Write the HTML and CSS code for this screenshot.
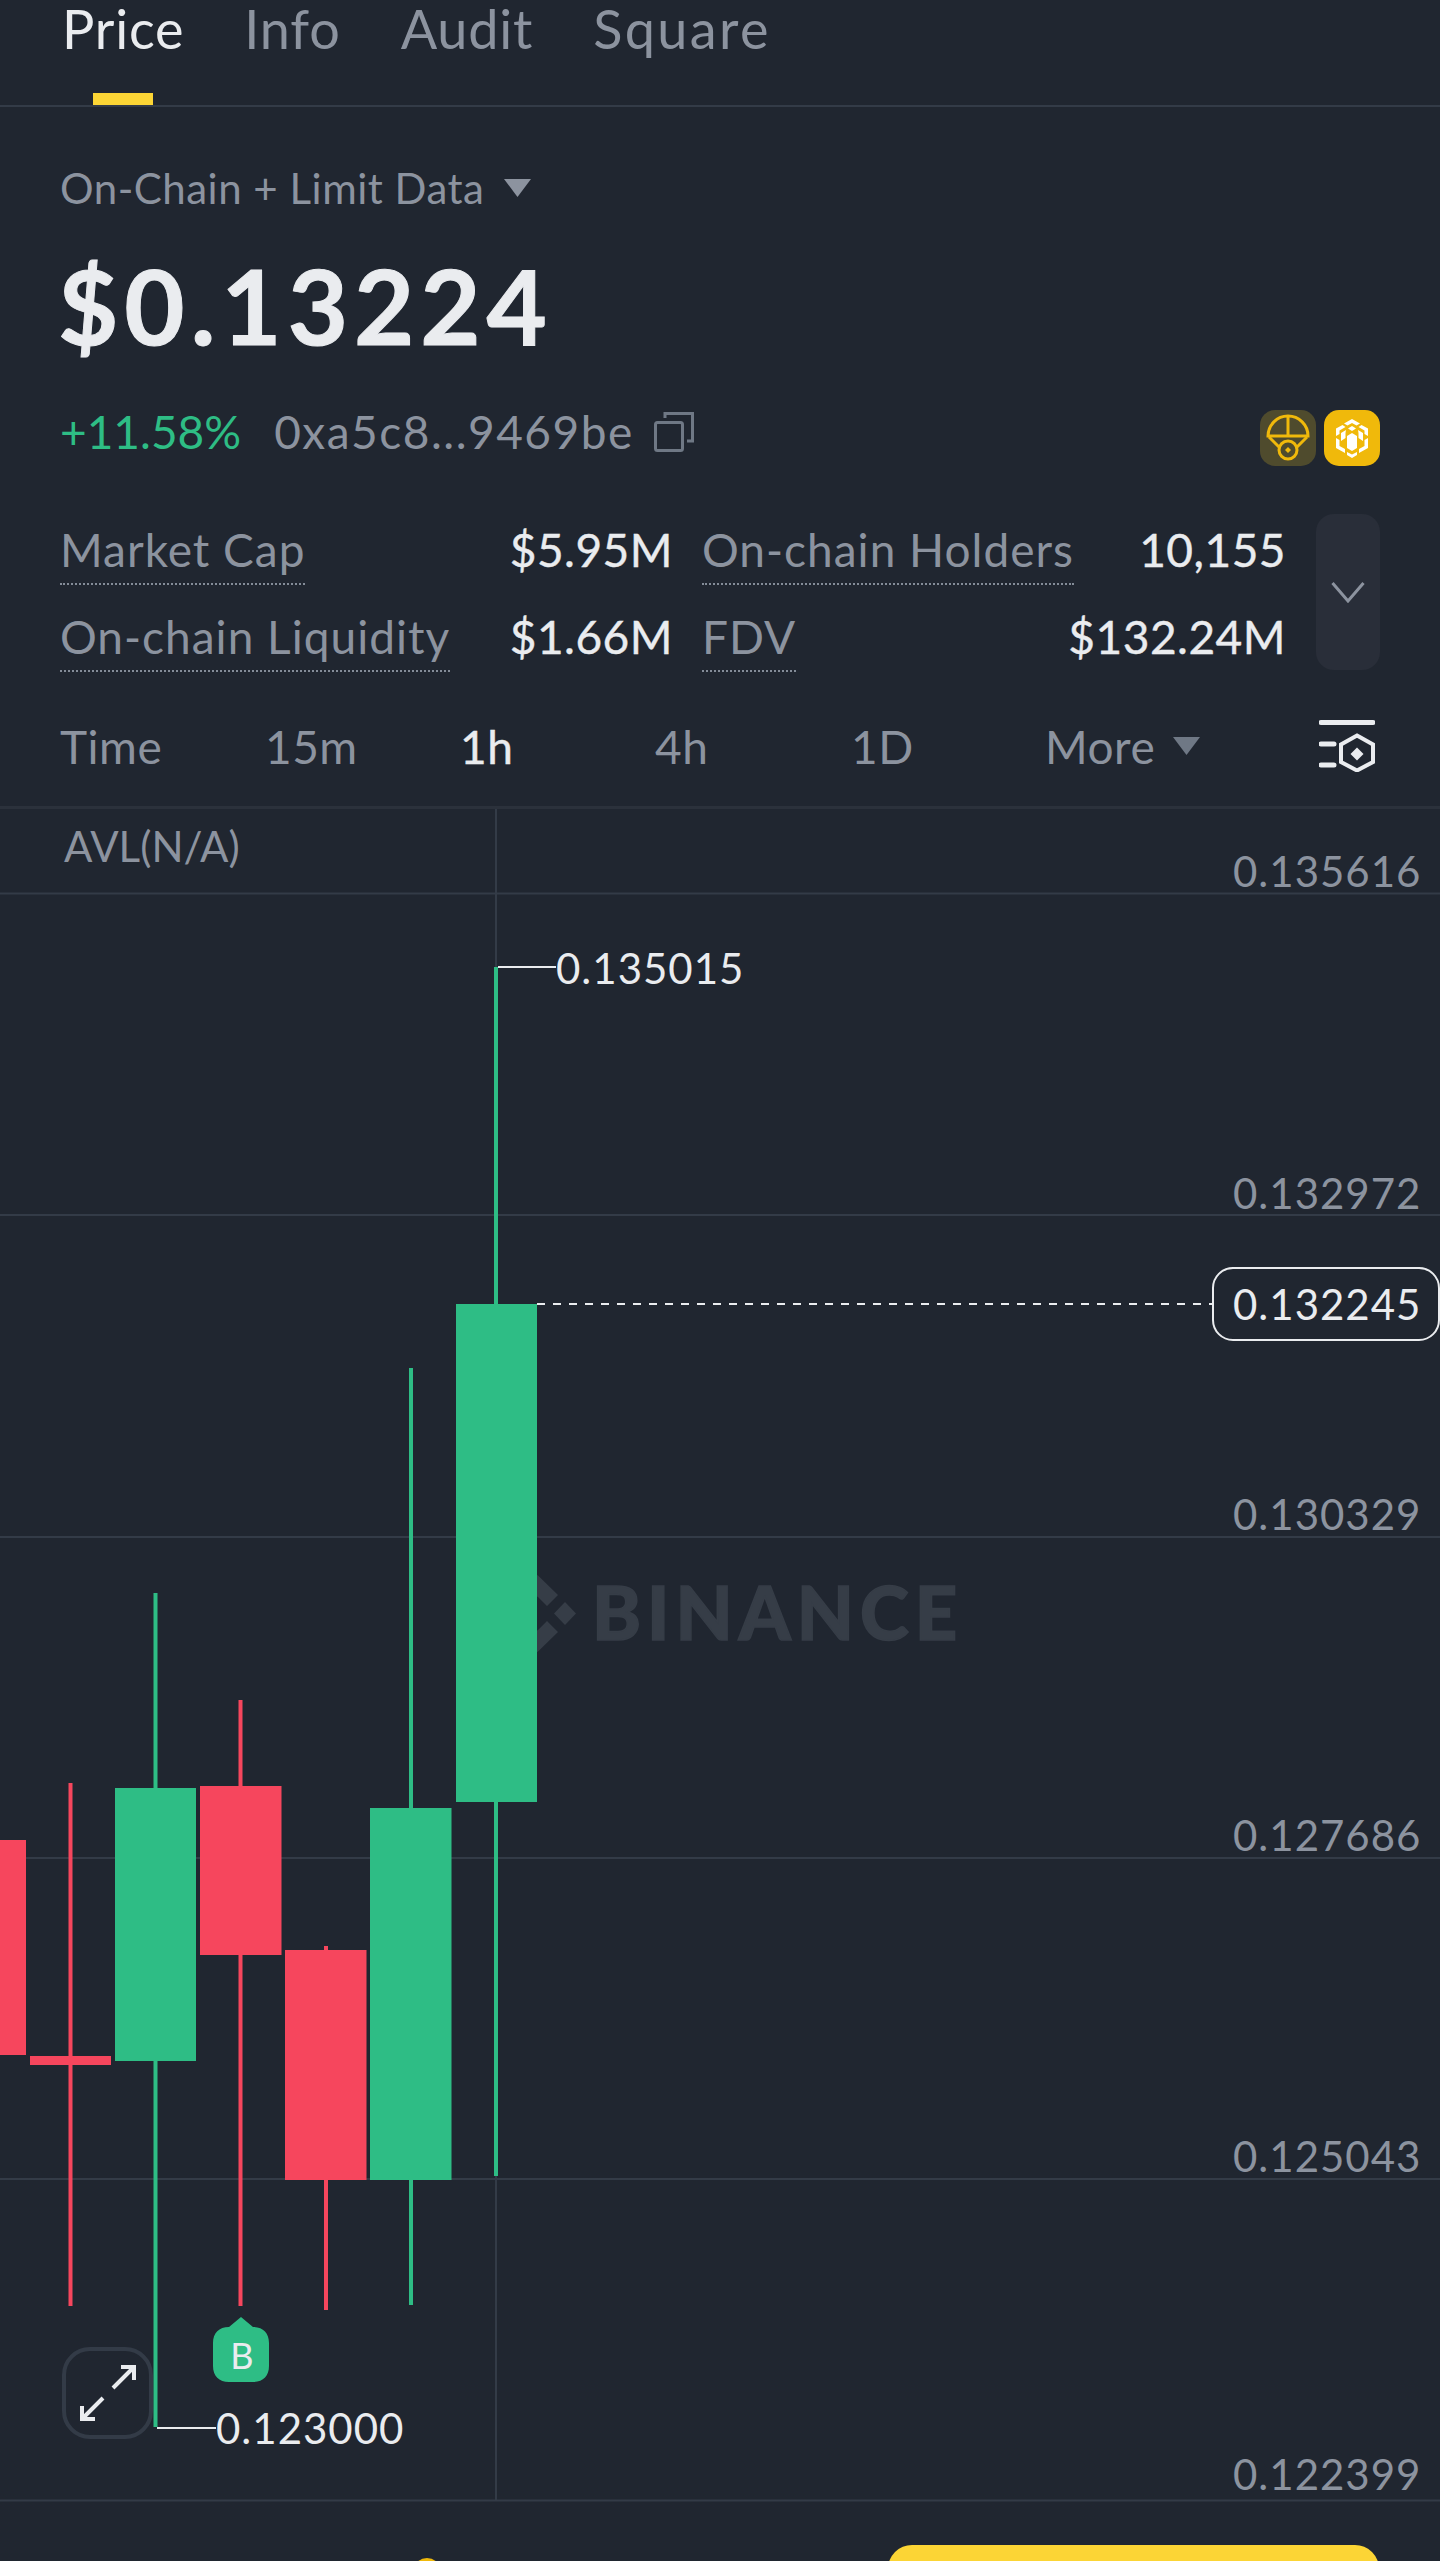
FILE: index.html
```html
<!DOCTYPE html>
<html>
	<head>
		<meta charset="utf-8">
		<title>Token price</title>
		<link rel="stylesheet" href="styles.css">
	</head>
	<body>
		<div class=page>
			<div class=tabs>
				<div class="tab active">Price</div>
				<div class=tab>Info</div>
				<div class=tab>Audit</div>
				<div class=tab>Square</div>
			</div>

			<div class=source>
				<span>On-Chain + Limit Data</span>
				<svg class=caret viewBox="0 0 27 18"><path d="M0 0H27L13.5 18Z"/></svg>
			</div>
			<div class=price>$0.13224</div>
			<div class=meta>
				<span class=change>+11.58%</span>
				<span class=address>0xa5c8...9469be</span>
				<svg class=copy viewBox="0 0 40 40" fill="none">
					<rect x="1.5" y="10.5" width="27" height="28" rx="2"/>
					<path d="M11 6V1.5H38.5V29H33"/>
				</svg>
				<div class=badges>
					<div class="badge airdrop">
						<svg viewBox="0 0 56 56" fill="none" stroke="#F0B90B" stroke-width="3">
							<path d="M8 26A20 20 0 0 1 48 26Z"/>
							<path d="M28 6V26M9 27L20 38M47 27L36 38"/>
							<circle cx="28" cy="40" r="9"/>
							<path d="M28 37L31 40L28 43L25 40Z" fill="#F0B90B" stroke="none"/>
						</svg>
					</div>
					<div class="badge chain">
						<svg viewBox="0 0 56 56" fill="#fff">
							<path d="M28 9L36 13.5L32.5 15.5L28 13L23.500 15.5L20 13.500Z"/>
							<path d="M28 16L32 18.5L28 21L24 18.500Z"/>
							<path d="M37.500 15L44 18.500V26L40.500 24V20.500L34.500 17Z"/>
							<path d="M18.500 15L12 18.500V26L15.500 24V20.500L21.500 17Z"/>
							<path d="M34 20L39 23V31L34.500 28V23Z"/>
							<path d="M22 20L17 23V31L21.500 28V23Z"/>
							<path d="M12 28L15.500 30V36L21 39V43L12 38Z"/>
							<path d="M44 28L40.500 30V36L35 39V43L44 38Z"/>
							<path d="M28 23L33 26V38L28 41L23 38V26Z"/>
							<path d="M23 42L28 44.500L33 42V45L28 48L23 45Z"/>
						</svg>
					</div>
				</div>
			</div>

			<div class=stats>
				<div class=stat-grid>
					<div class=stat><span class=stat-label>Market Cap</span><span class=stat-value>$5.95M</span></div>
					<div class=stat><span class=stat-label>On-chain Holders</span><span class=stat-value>10,155</span></div>
					<div class=stat><span class=stat-label>On-chain Liquidity</span><span class=stat-value>$1.66M</span></div>
					<div class=stat><span class=stat-label>FDV</span><span class=stat-value>$132.24M</span></div>
				</div>
				<div class=expand-stats>
					<svg viewBox="0 0 34 22" fill="none"><path d="M1.500 2L17 20L32.500 2"/></svg>
				</div>
			</div>

			<div class=intervals>
				<span>Time</span>
				<span>15m</span>
				<span class=active>1h</span>
				<span>4h</span>
				<span>1D</span>
				<span class=more>More <svg class=caret viewBox="0 0 27 18"><path d="M0 0H27L13.5 18Z"/></svg></span>
				<svg class=chart-settings viewBox="0 0 56 52" fill="none">
					<path d="M2 2.500H54M2 24H15M2 45H15" stroke-width="5" stroke-linecap="round"/>
					<path d="M38 15.500L54 24.500V42L38 50.500L22 42V24.500Z" stroke-width="4"/>
					<path d="M38 27.500L44.500 34L38 40.500L31.500 34Z" fill="#EAECEF" stroke="none"/>
				</svg>
			</div>

			<div class=chart>
				<svg class=chart-canvas viewBox="0 809 1440 1693">
					<!-- watermark -->
					<g class=watermark>
						<path d="M537.500 1575L558 1595L547 1606L537.500 1596.500L528 1606L517 1595Z"/>
						<path d="M537.500 1652L558 1632L547 1621L537.500 1630.500L528 1621L517 1632Z"/>
						<path d="M565 1602L576 1613.500L565 1625L554 1613.500Z"/>
						<text x="592" y="1640">BINANCE</text>
					</g>

					<!-- grid -->
					<g class=grid>
						<path d="M0 893.500H1440M0 1215H1440M0 1537H1440M0 1858H1440M0 2179H1440M0 2500.500H1440"/>
						<path d="M496 809V2500"/>
					</g>

					<!-- candles -->
					<g class=up>
						<rect x="153.500" y="1593" width="4" height="834"/>
						<rect x="115" y="1788" width="81" height="273"/>
						<rect x="409" y="1368" width="4" height="937"/>
						<rect x="370" y="1808" width="81.500" height="372"/>
						<rect x="494" y="967" width="4" height="1209"/>
						<rect x="456" y="1304" width="81" height="498"/>
					</g>
					<g class=down>
						<rect x="0" y="1840" width="26" height="215"/>
						<rect x="68.500" y="1783" width="4" height="523"/>
						<rect x="30" y="2056" width="81" height="9"/>
						<rect x="238.500" y="1700" width="4" height="606"/>
						<rect x="200" y="1786" width="81.500" height="169"/>
						<rect x="324" y="1946" width="4" height="364"/>
						<rect x="285" y="1950" width="81.500" height="230"/>
					</g>

					<!-- high, low and last price -->
					<path class=marker d="M498 967H556M157 2428H216"/>
					<path class=last-line d="M537 1304H1212"/>
					<rect class=last-tag x="1213" y="1268" width="226" height="72" rx="20"/>
					<text class=chart-price x="556" y="984">0.135015</text>
					<text class=chart-price x="216" y="2444">0.123000</text>
					<text class=chart-price x="1233" y="1320">0.132245</text>

					<!-- price axis -->
					<text class=axis x="1233" y="887">0.135616</text>
					<text class=axis x="1233" y="1209">0.132972</text>
					<text class=axis x="1233" y="1530">0.130329</text>
					<text class=axis x="1233" y="1851">0.127686</text>
					<text class=axis x="1233" y="2172">0.125043</text>
					<text class=axis x="1233" y="2490">0.122399</text>
					<text class=indicator x="64" y="862">AVL(N/A)</text>

					<!-- buy marker -->
					<path class=buy d="M229 2327L241 2317L253 2327C263 2327 269 2333 269 2343V2366C269 2376 263 2382 253 2382H229C219 2382 213 2376 213 2366V2343C213 2333 219 2327 229 2327Z"/>
					<text class=buy-label x="242" y="2369">B</text>

					<!-- fullscreen -->
					<rect class=fullscreen x="64" y="2349" width="87" height="88" rx="26"/>
					<path class=fullscreen-arrows d="M113 2388L133 2368M121 2367H134V2380M103 2398L83 2418M82 2406V2419H95"/>
				</svg>
			</div>

			<div class=footer>
				<div class=coin></div>
				<div class=trade-button></div>
			</div>
		</div>
	</body>
</html>
```

FILE: styles.css
```css
body {
	margin: 0;
	background-color: #202630;
	font-family: Lato, "Liberation Sans", sans-serif;
	color: #8C939F;
}

.page {
	width: 1440px;
	height: 2561px;
	overflow: hidden;
}

.tabs {
	display: flex;
	gap: 60px;
	height: 105px;
	padding: 0 62px;
	border-bottom: 2px solid #333B47;
}

.tab {
	display: flex;
	flex-direction: column;
	align-items: center;
	font-size: 54px;
	line-height: 58px;
	letter-spacing: 0.8px;
}

.tab:last-child {
	letter-spacing: 2.4px;
}

.tab.active {
	color: #EAECEF;
}

.tab.active::after {
	content: "";
	width: 60px;
	height: 12px;
	margin-top: auto;
	background-color: #FCD535;
}

.source {
	display: flex;
	align-items: center;
	gap: 19px;
	margin-top: 56px;
	padding-left: 60px;
	font-size: 42px;
	line-height: 50px;
	letter-spacing: 0.5px;
}

.caret {
	width: 27px;
	height: 18px;
	fill: #8C939F;
}

.price {
	margin-top: 32px;
	padding-left: 58px;
	font-size: 104px;
	line-height: 120px;
	font-weight: bold;
	letter-spacing: 6px;
	-webkit-text-stroke: 1px #EAECEF;
	color: #EAECEF;
}

.meta {
	display: flex;
	align-items: center;
	height: 56px;
	margin-top: 45px;
	padding: 0 60px;
	font-size: 46px;
}

.change, .address, .copy {
	margin-bottom: 13px;
}

.change {
	color: #2EBD85;
}

.address {
	margin-left: 33px;
	letter-spacing: 1.5px;
}

.copy {
	width: 40px;
	height: 40px;
	margin-left: 20px;
	stroke: #6F7885;
	stroke-width: 3;
}

.badges {
	display: flex;
	gap: 8px;
	margin-left: auto;
}

.badge {
	width: 56px;
	height: 56px;
	border-radius: 15px;
}

.badge svg {
	display: block;
}

.airdrop {
	background-color: #4F4B2D;
}

.chain {
	background-color: #F0B90B;
}

.stats {
	display: flex;
	gap: 30px;
	height: 156px;
	margin-top: 48px;
	padding: 0 60px;
}

.stat-grid {
	flex: 1;
	display: grid;
	grid-template-columns: 613px 584px;
	column-gap: 29px;
	row-gap: 26px;
	padding-top: 8px;
}

.stat {
	display: flex;
	justify-content: space-between;
	align-items: baseline;
	height: 60px;
}

.stat-label {
	font-size: 46px;
	line-height: 50px;
	padding-bottom: 8px;
	letter-spacing: 1px;
	border-bottom: 2px dotted #848C98;
}

.stat-value {
	font-size: 46px;
	letter-spacing: 0.5px;
	-webkit-text-stroke: 0.4px #EAECEF;
	color: #EAECEF;
}

.expand-stats {
	flex: none;
	display: flex;
	align-items: center;
	justify-content: center;
	width: 64px;
	border-radius: 18px;
	background-color: #292E39;
}

.expand-stats svg {
	width: 34px;
	height: 22px;
	stroke: #8C939F;
	stroke-width: 3;
}

.intervals {
	display: grid;
	grid-template-columns: 205px 195px 195px 196px 194px 274px 56px;
	align-items: center;
	height: 120px;
	padding: 16px 0 0 60px;
	border-bottom: 3px solid #2B313B;
	font-size: 46px;
	letter-spacing: 0.5px;
}

.intervals .active {
	color: #EAECEF;
	-webkit-text-stroke: 0.4px #EAECEF;
}

.more {
	display: flex;
	align-items: center;
	gap: 18px;
}

.more .caret {
	fill: #6F7885;
}

.chart-settings {
	width: 56px;
	height: 52px;
	stroke: #EAECEF;
}

.chart {
	height: 1693px;
}

.chart-canvas {
	display: block;
	width: 1440px;
	height: 1693px;
}

.grid {
	fill: none;
	stroke: #333B47;
	stroke-width: 2;
}

.up {
	fill: #2EBD85;
}

.down {
	fill: #F6465D;
}

.watermark {
	fill: #363D47;
}

.watermark text {
	font-size: 74px;
	font-weight: 900;
	letter-spacing: 6px;
	stroke: #363D47;
	stroke-width: 1.5;
}

.marker {
	fill: none;
	stroke: #EAECEF;
	stroke-width: 2;
}

.last-line {
	fill: none;
	stroke: #EAECEF;
	stroke-width: 2;
	stroke-dasharray: 8 8;
}

.last-tag {
	fill: #202630;
	stroke: #EAECEF;
	stroke-width: 2;
}

.chart-price {
	font-size: 42px;
	letter-spacing: 1px;
	fill: #EAECEF;
}

.axis {
	font-size: 42px;
	letter-spacing: 1px;
	fill: #8C939F;
}

.indicator {
	font-size: 42px;
	fill: #8C939F;
}

.buy {
	fill: #2EBD85;
}

.buy-label {
	font-size: 36px;
	fill: #EAECEF;
	text-anchor: middle;
}

.fullscreen {
	fill: none;
	stroke: #333B47;
	stroke-width: 4;
}

.fullscreen-arrows {
	fill: none;
	stroke: #EAECEF;
	stroke-width: 4;
}

.footer {
	display: flex;
	height: 59px;
}

.coin {
	width: 28px;
	height: 28px;
	margin: 56px 0 0 413px;
	border-radius: 50%;
	background-color: #F0B90B;
}

.trade-button {
	width: 491px;
	height: 60px;
	margin: 43px 0 0 447px;
	border-radius: 24px 24px 0 0;
	background-color: #FCD535;
}
```
